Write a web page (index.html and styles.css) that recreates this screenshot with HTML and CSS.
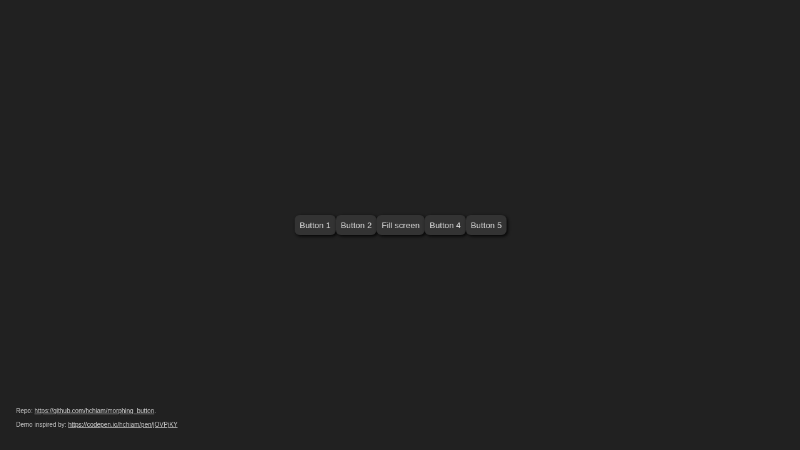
FILE: index.html
```html
<!DOCTYPE html>
<html lang="en">
<head>
<meta charset="utf-8">
<title>Morphing button</title>
<link rel="stylesheet" href="styles.css">
</head>
<body>
<main class="stage">
  <div class="buttons">
    <button class="btn">Button 1</button>
    <button class="btn">Button 2</button>
    <button class="btn">Fill screen</button>
    <button class="btn">Button 4</button>
    <button class="btn">Button 5</button>
  </div>
</main>
<footer class="notes">
  <p>Repo: <a href="#">https://github.com/hchiam/morphing_button</a>.</p>
  <p>Demo inspired by: <a href="#">https://codepen.io/hchiam/pen/jOVPjKY</a></p>
</footer>
</body>
</html>
```
FILE: styles.css
```css
html, body {
  margin: 0;
  height: 450px;
  overflow: hidden;
  background: #212121;
}
body {
  color: #ccc;
  font-family: "Liberation Sans", Arial, sans-serif;
  display: grid;
  grid-template: 1fr / 1fr;
}
.stage {
  grid-area: 1 / 1;
  display: flex;
  align-items: center;
  justify-content: center;
  padding-left: 0.4px;
}
.buttons {
  display: flex;
  transform: scale(0.625);
  will-change: transform;
}
.btn {
  height: 32px;
  padding: 0 8px;
  border: 0;
  border-radius: 8px;
  background: #333;
  color: #ddd;
  font: 13.33px "Liberation Sans", Arial, sans-serif;
  box-shadow: 2px 2px 5px #050505;
}
.notes {
  grid-area: 1 / 1;
  align-self: end;
  justify-self: start;
  margin: 0 0 22.5px 16px;
  font-size: 10px;
  transform: scale(0.625);
  transform-origin: 0 100%;
  will-change: transform;
}
.notes p { margin: 0 0 11px; }
.notes p:last-child { margin: 0; }
.notes a { color: #ccc; }
```
